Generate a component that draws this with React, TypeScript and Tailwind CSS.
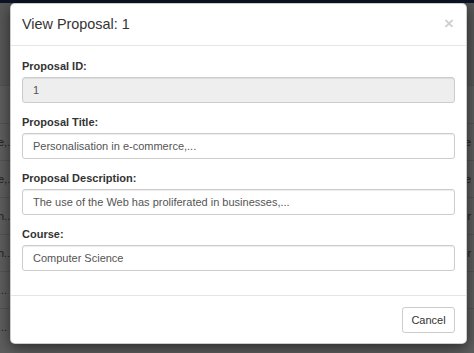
import React from "react";

const rows = [
  { a: "e,..", c: "e" },
  { a: "e,..", c: "e" },
  { a: "n...", c: "ir" },
  { a: "n...", c: "ir" },
  { a: "...", c: "" },
  { a: "...", c: "" },
];

function Field({ label, value, disabled }: { label: string; value: string; disabled?: boolean }) {
  return (
    <div className="mb-[12px]">
      <label className="block text-[11px] font-bold leading-[14px] mb-[4px] text-[#333]">{label}</label>
      <div
        className={`h-[26px] flex items-center px-[10px] border border-[#ccc] rounded-[3px] text-[11px] text-[#555] shadow-[inset_0_1px_1px_rgba(0,0,0,0.075)] ${
          disabled ? "bg-[#eee]" : "bg-white"
        }`}
      >
        {value}
      </div>
    </div>
  );
}

export default function App() {
  return (
    <div
      className="relative w-[474px] h-[353px] overflow-hidden bg-[#5e5e5e]"
      style={{ fontFamily: '"Liberation Sans", Arial, sans-serif' }}
    >
      {/* background page */}
      <div className="flex flex-col">
        <div className="h-[3px] bg-[#0c1424]" />
        <div className="h-[82px] bg-[#575757]" />
        <div className="h-[38px] border-t border-[#535353]" />
        {rows.map((r, i) => (
          <div key={i} className="h-[37px] flex border-t border-[#535353] text-[11px] text-[#1e1e1e]">
            <div className="w-[65px] flex items-center -ml-[2px]">{r.a}</div>
            <div className="w-[307px] border-l border-[#535353]" />
            <div className="flex-1 border-l border-[#535353] flex items-center pl-[94px] whitespace-nowrap">{r.c}</div>
          </div>
        ))}
      </div>

      {/* modal */}
      <div className="absolute left-[10px] top-[3px] w-[457px] bg-white rounded-[5px] border border-black/20 shadow-[0_4px_14px_rgba(0,0,0,0.55)] text-[#333]">
        <div className="h-[42px] flex items-center justify-between px-[11px] border-b border-[#e5e5e5]">
          <div className="text-[14.4px] leading-none">View Proposal: 1</div>
          <div className="text-[17px] font-bold text-black/20 leading-none -mt-[2px] mr-[1px]">×</div>
        </div>
        <div className="px-[11px] pt-[13px] pb-[12px]">
          <Field label="Proposal ID:" value="1" disabled />
          <Field label="Proposal Title:" value="Personalisation in e-commerce,..." />
          <Field label="Proposal Description:" value="The use of the Web has proliferated in businesses,..." />
          <Field label="Course:" value="Computer Science" />
        </div>
        <div className="border-t border-[#e5e5e5] px-[11px] pt-[11px] pb-[10px] flex justify-end">
          <div className="h-[26px] w-[53px] flex items-center justify-center border border-[#ccc] rounded-[3px] text-[11px] text-[#333] bg-white">
            Cancel
          </div>
        </div>
      </div>
    </div>
  );
}
